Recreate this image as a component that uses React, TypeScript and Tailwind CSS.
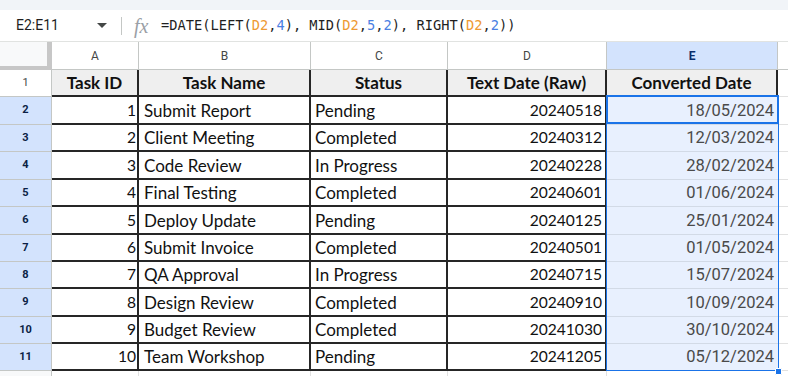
import React from 'react';

const rows = [
  { id: 1, name: 'Submit Report', status: 'Pending', raw: '20240518', date: '18/05/2024', h: 'h-[28px]' },
  { id: 2, name: 'Client Meeting', status: 'Completed', raw: '20240312', date: '12/03/2024', h: 'h-[27px]' },
  { id: 3, name: 'Code Review', status: 'In Progress', raw: '20240228', date: '28/02/2024', h: 'h-[28px]' },
  { id: 4, name: 'Final Testing', status: 'Completed', raw: '20240601', date: '01/06/2024', h: 'h-[27px]' },
  { id: 5, name: 'Deploy Update', status: 'Pending', raw: '20240125', date: '25/01/2024', h: 'h-[28px]' },
  { id: 6, name: 'Submit Invoice', status: 'Completed', raw: '20240501', date: '01/05/2024', h: 'h-[27px]' },
  { id: 7, name: 'QA Approval', status: 'In Progress', raw: '20240715', date: '15/07/2024', h: 'h-[27px]' },
  { id: 8, name: 'Design Review', status: 'Completed', raw: '20240910', date: '10/09/2024', h: 'h-[28px]' },
  { id: 9, name: 'Budget Review', status: 'Completed', raw: '20241030', date: '30/10/2024', h: 'h-[27px]' },
  { id: 10, name: 'Team Workshop', status: 'Pending', raw: '20241205', date: '05/12/2024', h: 'h-[27px]' },
];

const textFont = "font-['Lato','Liberation_Sans',sans-serif] text-[17px] text-[#111]";
const numFont = "font-['Lato','Liberation_Sans',sans-serif] text-[15.6px] text-[#111]";
const dataBorder = 'border-r-2 border-b-2 border-[#262626]';

const Ref = ({ c }: { c: string }) => <span className="text-[#ee9a33]">{c}</span>;
const Num = ({ c }: { c: string }) => <span className="text-[#4a80e3]">{c}</span>;

const FormulaBar: React.FC = () => (
  <div className="flex h-[32px] items-center border-b border-[#e1e3e1] bg-white">
    <div className="flex w-[121px] items-center pl-[16px] pr-[14px]">
      <span className="font-['Roboto',sans-serif] text-[14px] text-[#1f1f1f]">E2:E11</span>
      <svg className="ml-auto" width="10" height="6" viewBox="0 0 10 6">
        <path d="M0 0h10L5 5z" fill="#444746" />
      </svg>
    </div>
    <div className="h-[18px] w-px bg-[#c4c7c5]" />
    <span className="ml-[12px] w-[27px] font-['Liberation_Serif',serif] text-[20px] italic leading-none text-[#9aa0a6]">fx</span>
    <span className="font-['DejaVu_Sans_Mono',monospace] text-[13.7px] text-[#1f1f1f]">
      =DATE(LEFT(<Ref c="D2" />,<Num c="4" />), MID(<Ref c="D2" />,<Num c="5" />,<Num c="2" />), RIGHT(<Ref c="D2" />,<Num c="2" />))
    </span>
  </div>
);

const App: React.FC = () => {
  return (
    <div className="h-[376px] w-[788px] overflow-hidden bg-white">
      <div className="h-[10px] bg-[#f1f4f8]" />
      <FormulaBar />

      <div className="relative">
        {/* column letters */}
        <div className="flex h-[28px] font-['Roboto',sans-serif] text-[12px] text-[#444746]">
          <div className="w-[52px] border-b-4 border-r-[5px] border-[#c7c7c7] bg-[#f8f9fa]" />
          {['A', 'B', 'C', 'D'].map((l, i) => (
            <div
              key={l}
              className={`flex items-center justify-center border-b border-r border-[#c4c7c5] ${['w-[87px]', 'w-[172px]', 'w-[137px]', 'w-[159px]'][i]}`}
            >
              {l}
            </div>
          ))}
          <div className="flex w-[171px] items-center justify-center border-b border-r border-[#c4c7c5] bg-[#d3e3fd] font-bold text-[#0b2e6b]">
            E
          </div>
          <div className="flex-1 border-b border-[#c4c7c5]" />
        </div>

        {/* header row 1 */}
        <div className="flex h-[27px]">
          <div className="flex w-[52px] items-center justify-center border-b border-r border-[#c4c7c5] font-['Roboto',sans-serif] text-[11px] text-[#444746]">
            1
          </div>
          {['Task ID', 'Task Name', 'Status', 'Text Date (Raw)', 'Converted Date'].map((t, i) => (
            <div
              key={t}
              className={`flex items-center justify-center bg-[#efefef] pt-[1px] font-bold ${textFont} ${dataBorder} ${['w-[87px]', 'w-[172px]', 'w-[137px]', 'w-[159px]', 'w-[171px]'][i]}`}
            >
              {t}
            </div>
          ))}
          <div className="flex-1 border-b border-[#e1e1e1]" />
        </div>

        {rows.map((r) => (
          <div key={r.id} className={`flex ${r.h}`}>
            <div className="flex w-[52px] items-center justify-center border-b border-r border-[#c4c7c5] bg-[#d3e3fd] font-['Roboto',sans-serif] text-[11px] font-bold text-[#0b1f45]">
              {r.id + 1}
            </div>
            <div className={`flex w-[87px] items-center justify-end pr-[1px] pt-[1px] ${numFont} ${dataBorder}`}>{r.id}</div>
            <div className={`flex w-[172px] items-center pl-[5px] pt-[1px] ${textFont} ${dataBorder}`}>{r.name}</div>
            <div className={`flex w-[137px] items-center pl-[4px] pt-[1px] ${textFont} ${dataBorder}`}>{r.status}</div>
            <div className={`flex w-[159px] items-center justify-end pr-[3px] pt-[1px] ${numFont} ${dataBorder}`}>{r.raw}</div>
            <div className="flex w-[171px] items-center justify-end border-b border-[#d2dae6] bg-[#e8f0fe] pr-[4px] pt-[1px] font-['Roboto',sans-serif] text-[16.5px] text-[#4a4a4a]">
              {r.date}
            </div>
            <div className="flex-1 border-b border-[#e1e1e1]" />
          </div>
        ))}

        <div className="flex h-[10px]">
          <div className="w-[52px] border-r border-[#c4c7c5] bg-[#f8f9fa]" />
          <div className="w-[87px] border-r border-[#e1e1e1]" />
          <div className="w-[172px] border-r border-[#e1e1e1]" />
          <div className="w-[137px] border-r border-[#e1e1e1]" />
          <div className="w-[159px] border-r border-[#e1e1e1]" />
          <div className="w-[171px]" />
        </div>

        {/* selection E2:E11 */}
        <div className="pointer-events-none absolute left-[606px] top-[54px] h-[275px] w-[173px] border border-[#1a73e8]" />
        <div className="pointer-events-none absolute left-[606px] top-[53px] h-[29px] w-[173px] border-2 border-[#1a73e8]" />
        <div className="pointer-events-none absolute left-[775px] top-[326px] h-[7px] w-[7px] rounded-[1px] border border-white bg-[#1a73e8]" />
      </div>
    </div>
  );
};

export default App;
